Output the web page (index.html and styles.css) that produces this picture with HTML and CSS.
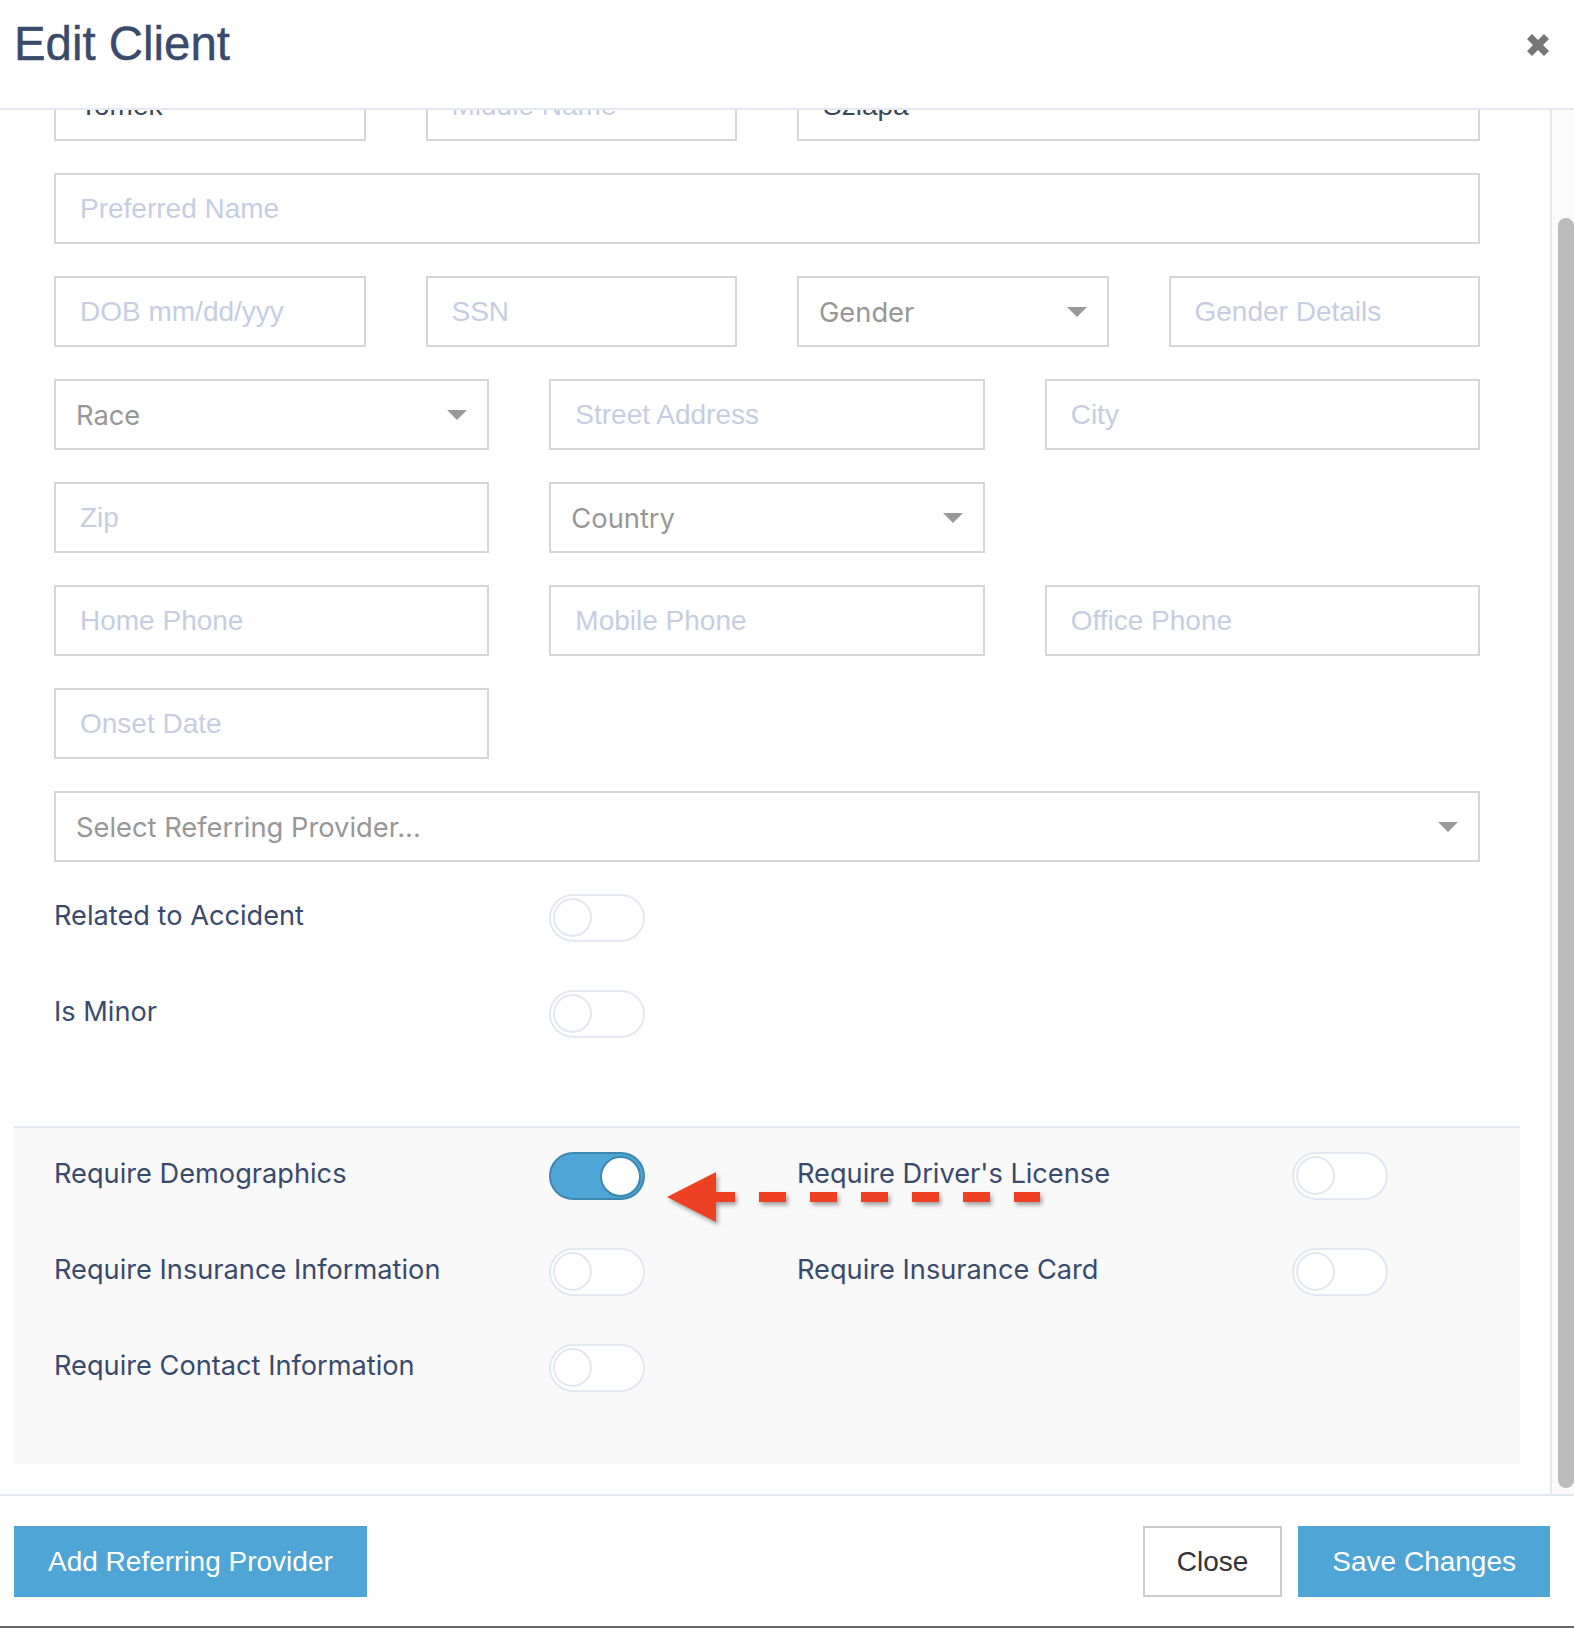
FILE: index.html
```html
<!DOCTYPE html>
<html lang="en">
<head>
    <meta charset="UTF-8">
    <meta name="viewport" content="width=device-width, initial-scale=1.0">
    <title>Edit Client</title>
    <link rel="stylesheet" href="styles.css">
</head>
<body>
    <div class="modal">
        <div class="modal-header">
            <h1>Edit Client</h1>
            <svg class="close-icon" viewBox="0 0 22 22" width="22" height="22">
                <path d="M0 5 5 0l6 6 6-6 5 5-6 6 6 6-5 5-6-6-6 6-5-5 6-6z"/>
            </svg>
        </div>

        <div class="modal-main">
            <div class="modal-body">
                <div class="form-content">
                    <div class="row cols-4">
                        <input type="text" value="Tomek">
                        <input type="text" placeholder="Middle Name">
                        <input type="text" class="span-2" value="Szlapa">
                    </div>
                    <div class="row">
                        <input type="text" placeholder="Preferred Name">
                    </div>
                    <div class="row cols-4">
                        <input type="text" placeholder="DOB mm/dd/yyy">
                        <input type="text" placeholder="SSN">
                        <div class="select">Gender</div>
                        <input type="text" placeholder="Gender Details">
                    </div>
                    <div class="row cols-3">
                        <div class="select">Race</div>
                        <input type="text" placeholder="Street Address">
                        <input type="text" placeholder="City">
                    </div>
                    <div class="row cols-3">
                        <input type="text" placeholder="Zip">
                        <div class="select">Country</div>
                    </div>
                    <div class="row cols-3">
                        <input type="text" placeholder="Home Phone">
                        <input type="text" placeholder="Mobile Phone">
                        <input type="text" placeholder="Office Phone">
                    </div>
                    <div class="row cols-3">
                        <input type="text" placeholder="Onset Date">
                    </div>
                    <div class="row">
                        <div class="select">Select Referring Provider...</div>
                    </div>

                    <div class="switches">
                        <div class="switch-row">
                            <span class="switch-label">Related to Accident</span>
                            <span class="toggle"></span>
                        </div>
                        <div class="switch-row first-col">
                            <span class="switch-label">Is Minor</span>
                            <span class="toggle"></span>
                        </div>
                    </div>

                    <div class="requirements">
                        <div class="switches">
                            <div class="switch-row">
                                <span class="switch-label">Require Demographics</span>
                                <span class="toggle on"></span>
                            </div>
                            <div class="switch-row">
                                <span class="switch-label">Require Driver's License</span>
                                <span class="toggle"></span>
                            </div>
                            <div class="switch-row">
                                <span class="switch-label">Require Insurance Information</span>
                                <span class="toggle"></span>
                            </div>
                            <div class="switch-row">
                                <span class="switch-label">Require Insurance Card</span>
                                <span class="toggle"></span>
                            </div>
                            <div class="switch-row">
                                <span class="switch-label">Require Contact Information</span>
                                <span class="toggle"></span>
                            </div>
                        </div>

                        <!-- red annotation arrow drawn over the screenshot -->
                        <svg class="annotation" viewBox="0 0 380 50" width="380" height="50">
                            <path d="M0 25 49 0v20h19v10H49v20z"/>
                            <path d="M92 20h27v10H92zM143 20h27v10h-27zM194 20h27v10h-27zM245 20h27v10h-27zM296 20h27v10h-27zM347 20h26v10h-26z"/>
                        </svg>
                    </div>
                </div>
            </div>
            <div class="scrollbar">
                <div class="scrollbar-thumb"></div>
            </div>
        </div>

        <div class="modal-footer">
            <button class="btn btn-primary">Add Referring Provider</button>
            <div class="footer-right">
                <button class="btn btn-default">Close</button>
                <button class="btn btn-primary">Save Changes</button>
            </div>
        </div>
    </div>
</body>
</html>
```

FILE: styles.css
```css
*, *::after {
    box-sizing: border-box;
}
body {
    margin: 0;
    font-family: "Liberation Sans", Arial, sans-serif;
    background-color: #fff;
}
.modal {
    display: flex;
    flex-direction: column;
    height: 1628px;
    overflow: hidden;
    border-bottom: 2px solid #666;
}
.modal-header {
    display: flex;
    justify-content: space-between;
    align-items: center;
    flex: none;
    height: 110px;
    padding: 0 25px 22px 14px;
    border-bottom: 2px solid #e3e8f1;
}
.modal-header h1 {
    margin: 0;
    font-size: 47.4px;
    font-weight: 400;
    color: #3a4a6b;
    -webkit-text-stroke: 0.4px #3a4a6b;
}
.close-icon {
    fill: #777;
    margin-top: 4px;
}
.modal-main {
    display: flex;
    flex: 1;
    min-height: 0;
}
.modal-body {
    flex: 1;
    overflow: hidden;
}
.form-content {
    position: relative;
    margin-top: -40px;
    padding: 0 70px 0 54px;
}
.row {
    display: grid;
    gap: 60px;
    margin-bottom: 32px;
}
.cols-4 {
    grid-template-columns: repeat(4, 1fr);
}
.cols-3 {
    grid-template-columns: repeat(3, 1fr);
}
.span-2 {
    grid-column: span 2;
}
input[type="text"] {
    width: 100%;
    height: 71px;
    padding: 0 24px;
    border: 2px solid #d6d6d6;
    border-radius: 0;
    outline: none;
    font-family: "Liberation Sans", Arial, sans-serif;
    font-size: 28px;
    color: #3b4656;
}
input::placeholder {
    color: #c6cee1;
    opacity: 1;
}
.select {
    position: relative;
    display: flex;
    align-items: center;
    height: 71px;
    padding: 2px 20px 0;
    border: 2px solid #d6d6d6;
    font-family: Inter, sans-serif;
    font-size: 27.3px;
    color: #979797;
}
.select::after {
    content: "";
    position: absolute;
    top: 29px;
    right: 20px;
    border-left: 10px solid transparent;
    border-right: 10px solid transparent;
    border-top: 10px solid #999;
}
.switches {
    display: grid;
    grid-template-columns: repeat(2, 1fr);
    gap: 48px 60px;
}
.switch-row {
    display: flex;
    align-items: flex-start;
}
.first-col {
    grid-column: 1;
}
.switch-label {
    width: 495px;
    font-family: Inter, sans-serif;
    font-size: 27.2px;
    line-height: 44px;
    color: #3a4a6b;
}
.toggle {
    position: relative;
    flex: none;
    width: 96px;
    height: 48px;
    border: 2px solid #e3e7f1;
    border-radius: 24px;
    background-color: #fff;
}
.toggle::after {
    content: "";
    position: absolute;
    top: 2px;
    left: 2px;
    width: 39px;
    height: 39px;
    border: 2px solid #e3e7f1;
    border-radius: 50%;
    background-color: #fff;
}
.toggle.on {
    border-color: #3e87ae;
    background-color: #4fa6d6;
}
.toggle.on::after {
    top: 1.5px;
    left: auto;
    right: 2px;
    width: 41px;
    height: 41px;
    border-color: #3e87ae;
}
.requirements {
    position: relative;
    margin: 88px -40px 30px;
    padding: 24px 40px 72px;
    border-top: 2px solid #e3e7f1;
    background-color: #f9f9f9;
}
.annotation {
    position: absolute;
    top: 44px;
    left: 653px;
    fill: #ee4023;
    filter: drop-shadow(2px 3px 2px rgba(0, 0, 0, 0.35));
}
.scrollbar {
    flex: none;
    width: 24px;
    padding: 108px 0 6px 6px;
    border-left: 2px solid #e9e9e9;
    background-color: #fafafa;
}
.scrollbar-thumb {
    height: 100%;
    border-radius: 8px;
    background-color: #bbb;
}
.modal-footer {
    display: flex;
    justify-content: space-between;
    flex: none;
    height: 132px;
    padding: 30px 24px 0 14px;
    border-top: 2px solid #e3e7f1;
}
.footer-right {
    display: flex;
    gap: 16px;
}
.btn {
    height: 71px;
    padding: 0 34px;
    border: none;
    border-radius: 0;
    font-family: "Liberation Sans", Arial, sans-serif;
    font-size: 28px;
}
.btn-primary {
    background-color: #4fa6d6;
    color: #fff;
}
.btn-default {
    padding: 0 32px;
    border: 2px solid #ccc;
    background-color: #fff;
    color: #333;
}
```
